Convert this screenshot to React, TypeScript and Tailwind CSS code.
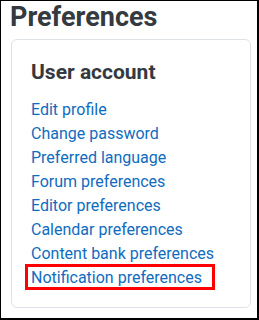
const links = [
  "Edit profile",
  "Change password",
  "Preferred language",
  "Forum preferences",
  "Editor preferences",
  "Calendar preferences",
  "Content bank preferences",
  "Notification preferences",
];

export default function App() {
  return (
    <div
      className="w-[259px] h-[320px] overflow-hidden bg-white border border-black border-r-2 border-b-2"
      style={{ fontFamily: "Roboto, 'Liberation Sans', sans-serif" }}
    >
      <h2 className="pl-[9px] text-[27px] leading-[32px] font-bold text-[#343a40]">
        Preferences
      </h2>
      <div className="ml-[10px] mt-[6px] w-[240px] rounded-md border border-[#dee2e6] px-[19px] pt-[20px] pb-[17px]">
        <h3 className="text-[21px] leading-[25px] font-bold text-[#343a40]">
          User account
        </h3>
        <ul className="mt-[13px] flex flex-col">
          {links.map((label, i) => (
            <li key={label} className="relative text-[16px] leading-[24px]">
              <a href="#" className="text-[#0f6cbf]">
                {label}
              </a>
              {i === links.length - 1 && (
                <div className="absolute left-[-6px] top-[-2px] w-[190px] h-[26px] border-[3px] border-[#ff0000] pointer-events-none" />
              )}
            </li>
          ))}
        </ul>
      </div>
    </div>
  );
}
